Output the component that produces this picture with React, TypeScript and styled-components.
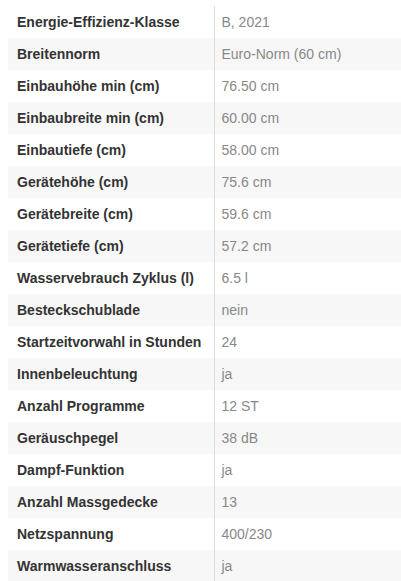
import React from 'react';
import styled, { createGlobalStyle } from 'styled-components';

const GlobalStyle = createGlobalStyle`
  html, body {
    margin: 0;
    padding: 0;
    background: #ffffff;
    overflow: hidden;
  }
  body {
    padding: 6px 0 0 8px;
    font-family: 'Liberation Sans', Arial, sans-serif;
  }
`;

const specs: [string, string][] = [
  ['Energie-Effizienz-Klasse', 'B, 2021'],
  ['Breitennorm', 'Euro-Norm (60 cm)'],
  ['Einbauhöhe min (cm)', '76.50 cm'],
  ['Einbaubreite min (cm)', '60.00 cm'],
  ['Einbautiefe (cm)', '58.00 cm'],
  ['Gerätehöhe (cm)', '75.6 cm'],
  ['Gerätebreite (cm)', '59.6 cm'],
  ['Gerätetiefe (cm)', '57.2 cm'],
  ['Wasservebrauch Zyklus (l)', '6.5 l'],
  ['Besteckschublade', 'nein'],
  ['Startzeitvorwahl in Stunden', '24'],
  ['Innenbeleuchtung', 'ja'],
  ['Anzahl Programme', '12 ST'],
  ['Geräuschpegel', '38 dB'],
  ['Dampf-Funktion', 'ja'],
  ['Anzahl Massgedecke', '13'],
  ['Netzspannung', '400/230'],
  ['Warmwasseranschluss', 'ja'],
];

const App: React.FC = () => (
  <>
    <GlobalStyle />
    <SpecTable>
      <colgroup>
        <col style={{ width: 206 }} />
        <col />
      </colgroup>
      <tbody>
        {specs.map(([label, value], i) => (
          <Row key={label} $striped={i % 2 === 1}>
            <Label>{label}</Label>
            <Value>{value}</Value>
          </Row>
        ))}
      </tbody>
    </SpecTable>
  </>
);

export default App;

const SpecTable = styled.table`
  width: 393px;
  border-collapse: collapse;
  table-layout: fixed;
`;

const Row = styled.tr<{ $striped: boolean }>`
  height: 32px;
  background: ${({ $striped }) => ($striped ? '#f7f7f7' : '#ffffff')};
`;

const Label = styled.td`
  padding: 0 4px 0 9px;
  font-size: 14px;
  font-weight: bold;
  color: #333333;
  white-space: nowrap;
  overflow: hidden;
  border-right: 1px solid #dddddd;
  vertical-align: middle;
`;

const Value = styled.td`
  padding: 0 8px 0 7px;
  font-size: 14px;
  color: #888888;
  white-space: nowrap;
  vertical-align: middle;
`;
